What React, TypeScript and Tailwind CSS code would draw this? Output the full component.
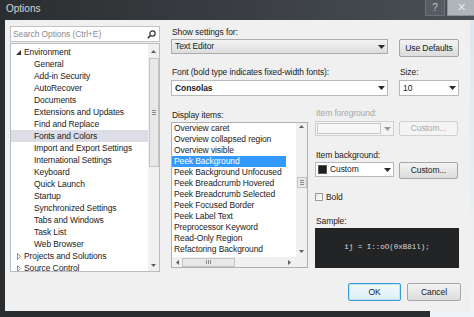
const tree = [
  { label: 'Environment', level: 0, open: true },
  { label: 'General', level: 1 },
  { label: 'Add-in Security', level: 1 },
  { label: 'AutoRecover', level: 1 },
  { label: 'Documents', level: 1 },
  { label: 'Extensions and Updates', level: 1 },
  { label: 'Find and Replace', level: 1 },
  { label: 'Fonts and Colors', level: 1, selected: true },
  { label: 'Import and Export Settings', level: 1 },
  { label: 'International Settings', level: 1 },
  { label: 'Keyboard', level: 1 },
  { label: 'Quick Launch', level: 1 },
  { label: 'Startup', level: 1 },
  { label: 'Synchronized Settings', level: 1 },
  { label: 'Tabs and Windows', level: 1 },
  { label: 'Task List', level: 1 },
  { label: 'Web Browser', level: 1 },
  { label: 'Projects and Solutions', level: 0, open: false },
  { label: 'Source Control', level: 0, open: false },
];

const displayItems = [
  'Overview caret',
  'Overview collapsed region',
  'Overview visible',
  'Peek Background',
  'Peek Background Unfocused',
  'Peek Breadcrumb Hovered',
  'Peek Breadcrumb Selected',
  'Peek Focused Border',
  'Peek Label Text',
  'Preprocessor Keyword',
  'Read-Only Region',
  'Refactoring Background',
];

const Arrow = ({ dir, color = '#555' }: { dir: 'up' | 'down' | 'left' | 'right'; color?: string }) => {
  const pts = {
    up: '0,4 3.5,0 7,4',
    down: '0,0 7,0 3.5,4',
    left: '4,0 4,7 0,3.5',
    right: '0,0 0,7 4,3.5',
  }[dir];
  const vertical = dir === 'up' || dir === 'down';
  return (
    <svg width={vertical ? 7 : 4} height={vertical ? 4 : 7} viewBox={vertical ? '0 0 7 4' : '0 0 4 7'}>
      <polygon points={pts} fill={color} />
    </svg>
  );
};

const SmallArrow = ({ dir }: { dir: 'up' | 'down' | 'left' | 'right' }) => {
  const pts = {
    up: '0,3 2.5,0 5,3',
    down: '0,0 5,0 2.5,3',
    left: '3,0 3,5 0,2.5',
    right: '0,0 0,5 3,2.5',
  }[dir];
  const vertical = dir === 'up' || dir === 'down';
  return (
    <svg width={vertical ? 5 : 3} height={vertical ? 3 : 5} viewBox={vertical ? '0 0 5 3' : '0 0 3 5'}>
      <polygon points={pts} fill="#606060" />
    </svg>
  );
};

const Combo = ({
  w,
  h = 15,
  white,
  disabled,
  children,
}: {
  w: number;
  h?: number;
  white?: boolean;
  disabled?: boolean;
  children?: React.ReactNode;
}) => (
  <div
    style={{ width: w, height: h }}
    className={`flex items-center border ${
      disabled ? 'border-[#d0d0d0] bg-[#f4f4f4]' : white ? 'border-[#b8b8b8] bg-white' : 'border-[#acacac] bg-gradient-to-b from-[#f3f3f3] to-[#dddddd]'
    }`}
  >
    <div className="flex-1 flex items-center min-w-0 h-full">{children}</div>
    <div className="w-[12px] flex items-center justify-center">
      <Arrow dir="down" color={disabled ? '#9a9a9a' : '#2a2a2a'} />
    </div>
  </div>
);

const Button = ({
  w,
  h = 18,
  disabled,
  primary,
  children,
}: {
  w: number;
  h?: number;
  disabled?: boolean;
  primary?: boolean;
  children: React.ReactNode;
}) => (
  <div
    style={{ width: w, height: h }}
    className={`flex items-center justify-center rounded-[2px] border ${
      disabled
        ? 'border-[#cfcfcf] bg-[#f4f4f4] text-[#a8a8a8]'
        : primary
          ? 'border-[#3c9ad6] bg-gradient-to-b from-[#f2f9fd] to-[#dceffa] shadow-[inset_0_0_0_1px_#bfe3f7] text-[#1b1b1b]'
          : 'border-[#a6a6a6] bg-gradient-to-b from-[#f3f3f3] to-[#dcdcdc] text-[#1b1b1b]'
    }`}
  >
    {children}
  </div>
);

const Label = ({ children, disabled }: { children: React.ReactNode; disabled?: boolean }) => (
  <div className={`h-[12px] leading-[12px] pl-[1px] ${disabled ? 'text-[#a8a8a8]' : ''}`}>{children}</div>
);

const TreePane = () => (
  <div className="mt-[1px] h-[229px] w-[150px] border border-[#b9bcc4] bg-white flex">
    <div className="flex-1 pt-[2px] overflow-hidden">
      {tree.map((t) => (
        <div
          key={t.label}
          className={`h-[12px] leading-[12px] flex items-center whitespace-nowrap ${t.selected ? 'bg-[#dcdde6]' : ''}`}
        >
          {t.level === 0 ? (
            <>
              <div className="w-[13px] flex justify-end pr-[3px]">
                {t.open ? (
                  <svg width="5" height="5" viewBox="0 0 5 5">
                    <polygon points="5,0 5,5 0,5" fill="#333" />
                  </svg>
                ) : (
                  <svg width="4" height="7" viewBox="0 0 4 7">
                    <polygon points="0.5,0.5 0.5,6.5 3.5,3.5" fill="none" stroke="#777" strokeWidth="0.8" />
                  </svg>
                )}
              </div>
              <span>{t.label}</span>
            </>
          ) : (
            <span className="pl-[23px]">{t.label}</span>
          )}
        </div>
      ))}
    </div>
    <div className="w-[11px] bg-[#f0f0f0] flex flex-col items-center">
      <div className="h-[14px] flex items-center">
        <SmallArrow dir="up" />
      </div>
      <div className="w-[10px] h-[109px] border border-[#c4c4c4] bg-[#e8e8e8] flex items-center justify-center">
        <div className="flex flex-col gap-[1px]">
          <div className="w-[4px] h-[1px] bg-[#8a8a8a]" />
          <div className="w-[4px] h-[1px] bg-[#8a8a8a]" />
          <div className="w-[4px] h-[1px] bg-[#8a8a8a]" />
        </div>
      </div>
      <div className="flex-1" />
      <div className="h-[12px] flex items-center">
        <SmallArrow dir="down" />
      </div>
    </div>
  </div>
);

const DisplayList = () => (
  <div className="mt-[1px] w-[137px] h-[146px] border border-[#b0b0b0] bg-white flex flex-col">
    <div className="flex-1 flex min-h-0">
      <div className="flex-1 overflow-hidden">
        {displayItems.map((d) => (
          <div
            key={d}
            className={`h-[11px] leading-[11px] pl-[2px] whitespace-nowrap ${
              d === 'Peek Background' ? 'bg-[#3399ff] text-white w-[114px]' : ''
            }`}
          >
            {d}
          </div>
        ))}
      </div>
      <div className="w-[11px] bg-[#f0f0f0] flex flex-col items-center">
        <div className="h-[7px] flex items-center">
          <SmallArrow dir="up" />
        </div>
        <div className="mt-[47px] w-[10px] h-[11px] border border-[#c4c4c4] bg-[#e8e8e8] flex items-center justify-center">
          <div className="flex flex-col gap-[1px]">
            <div className="w-[4px] h-[1px] bg-[#8a8a8a]" />
            <div className="w-[4px] h-[1px] bg-[#8a8a8a]" />
            <div className="w-[4px] h-[1px] bg-[#8a8a8a]" />
          </div>
        </div>
        <div className="flex-1" />
        <div className="h-[12px] flex items-center">
          <SmallArrow dir="down" />
        </div>
      </div>
    </div>
    <div className="h-[10px] flex bg-[#f0f0f0]">
      <div className="flex-1 flex items-center">
        <div className="w-[10px] flex justify-center">
          <SmallArrow dir="left" />
        </div>
        <div className="w-[53px] h-[9px] border border-[#c4c4c4] bg-[#e8e8e8] flex items-center justify-center gap-[1px]">
          <div className="w-[1px] h-[4px] bg-[#8a8a8a]" />
          <div className="w-[1px] h-[4px] bg-[#8a8a8a]" />
          <div className="w-[1px] h-[4px] bg-[#8a8a8a]" />
        </div>
        <div className="flex-1" />
        <div className="w-[14px] flex justify-center">
          <SmallArrow dir="right" />
        </div>
      </div>
      <div className="w-[11px]" />
    </div>
  </div>
);

export default function App() {
  return (
    <div className="w-[474px] h-[317px] overflow-hidden flex flex-col bg-[#2a2d30] font-['Liberation_Sans',Arial,sans-serif] text-[8.5px] tracking-[-0.1px] text-[#1b1b1b]">
      {/* title bar */}
      <div className="h-[20px] flex bg-gradient-to-r from-[#2b2e31] via-[#3a3e42] to-[#4a5056]">
        <div className="pl-[6px] pt-[2px] text-[10px] leading-[14px] text-[#d6d6d6] tracking-normal">Options</div>
        <div className="flex-1" />
        <div className="w-[20px] h-[16px] mr-[2px] flex items-center justify-center border-x border-b border-[#6b7176] bg-[#565c62] text-[#c4c4c4] text-[10px]">
          ?
        </div>
        <div className="w-[27px] h-[16px] flex items-center justify-center border-l border-b border-[#8c9398] bg-[#aeb6bb] text-[#e6e6e6] text-[11px]">
          ✕
        </div>
      </div>

      <div className="h-[291px] flex">
        <div className="w-[5px]" />
        {/* dialog body */}
        <div className="w-[465px] bg-[#f0f0f0] pt-[6px] pl-[5px] pr-[11px] flex flex-col">
          <div className="flex">
            {/* left column */}
            <div className="w-[150px] flex flex-col">
              <div className="h-[16px] border border-[#c2c2c2] bg-white flex items-center pl-[2px] pr-[3px]">
                <span className="flex-1 text-[#8d8d8d]">Search Options (Ctrl+E)</span>
                <svg width="9" height="9" viewBox="0 0 9 9">
                  <circle cx="5.5" cy="3.5" r="2.6" fill="none" stroke="#333" strokeWidth="1.2" />
                  <line x1="3.6" y1="5.4" x2="0.8" y2="8.2" stroke="#333" strokeWidth="1.6" />
                </svg>
              </div>
              <TreePane />
            </div>

            {/* right column */}
            <div className="ml-[11px] w-[288px] flex flex-col">
              <Label>Show settings for:</Label>
              <div className="mt-[1px] flex items-start">
                <Combo w={217}>
                  <span className="pl-[3px]">Text Editor</span>
                </Combo>
                <div className="ml-[11px]">
                  <Button w={60}>Use Defaults</Button>
                </div>
              </div>

              <div className="mt-[9px] flex">
                <div className="w-[228px]">
                  <Label>Font (bold type indicates fixed-width fonts):</Label>
                </div>
                <Label>Size:</Label>
              </div>
              <div className="mt-[2px] flex">
                <Combo w={217} h={16} white>
                  <span className="pl-[3px] font-bold">Consolas</span>
                </Combo>
                <div className="ml-[11px]">
                  <Combo w={60} h={16} white>
                    <span className="pl-[3px]">10</span>
                  </Combo>
                </div>
              </div>

              <div className="mt-[11px] flex">
                <div className="pt-[2px] flex flex-col">
                  <Label>Display items:</Label>
                  <DisplayList />
                </div>
                <div className="ml-[7px] w-[145px] flex flex-col">
                  <Label disabled>Item foreground:</Label>
                  <div className="mt-[2px] flex">
                    <Combo w={79} disabled>
                      <div className="ml-[1px] w-[66px] h-[11px] border border-[#c8c8c8] bg-[#f7f7f7]" />
                    </Combo>
                    <div className="ml-[5px]">
                      <Button w={59} h={15} disabled>
                        Custom...
                      </Button>
                    </div>
                  </div>

                  <div className="mt-[13px]">
                    <Label>Item background:</Label>
                  </div>
                  <div className="mt-[1px] flex items-start">
                    <Combo w={79} white>
                      <div className="ml-[2px] w-[9px] h-[9px] bg-[#1e1e1e] border border-[#555]" />
                      <span className="pl-[3px]">Custom</span>
                    </Combo>
                    <div className="ml-[5px]">
                      <Button w={59} h={17}>
                        Custom...
                      </Button>
                    </div>
                  </div>

                  <div className="mt-[12px] h-[12px] flex items-center">
                    <div className="w-[8px] h-[8px] border border-[#9a9a9a] bg-gradient-to-br from-[#e6e6e6] to-white" />
                    <span className="pl-[3px]">Bold</span>
                  </div>

                  <div className="mt-[12px]">
                    <Label>Sample:</Label>
                  </div>
                  <div className="mt-[1px] h-[40px] bg-[#222426] flex items-center justify-center">
                    <span className="font-['Liberation_Mono',monospace] text-[7.5px] tracking-normal text-[#dcdcdc]">
                      ij = I::oO(0xB81l);
                    </span>
                  </div>
                </div>
              </div>
            </div>
          </div>

          {/* bottom buttons */}
          <div className="mt-[11px] mr-[-2px] flex justify-end gap-[6px]">
            <Button w={53} primary>
              OK
            </Button>
            <Button w={54}>Cancel</Button>
          </div>
        </div>
        <div className="w-[4px] bg-gradient-to-b from-[#dce8f1] to-[#eef4f8]" />
      </div>

      <div className="flex-1 flex">
        <div className="flex-1" />
        <div className="w-[44px] bg-[#eef3f7]" />
      </div>
    </div>
  );
}
